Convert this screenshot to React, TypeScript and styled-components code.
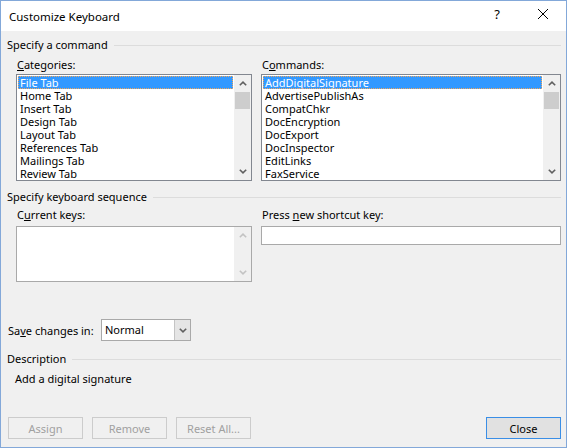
import React from "react";
import styled, { createGlobalStyle } from "styled-components";

const Global = createGlobalStyle`
  html, body { margin: 0; padding: 0; background: #f0f0f0; }
  * { box-sizing: border-box; }
  body { font-family: "Noto Sans", "Open Sans", Arial, sans-serif; font-size: 11px; color: #000; }
`;

const Window = styled.div`
  width: 567px;
  height: 448px;
  border: 1px solid #83a8d9;
  background: #f0f0f0;
  display: flex;
  flex-direction: column;
  overflow: hidden;
`;

const TitleBar = styled.div`
  height: 30px;
  background: #fff;
  display: flex;
  align-items: center;
  padding-left: 8px;
  flex-shrink: 0;
`;

const Title = styled.div`
  flex: 1;
  font-size: 11.5px;
  line-height: 16px;
  margin-top: 1px;
`;

const TitleButton = styled.div`
  width: 46px;
  height: 30px;
  display: flex;
  align-items: flex-start;
  justify-content: center;
  padding-top: 5px;
  font-size: 13px;
  line-height: 16px;
`;

const Body = styled.div`
  flex: 1;
  display: flex;
  flex-direction: column;
  padding: 0 5px 8px 6px;
`;

const SectionHeader = styled.div<{ $top: number }>`
  display: flex;
  align-items: center;
  gap: 6px;
  height: 16px;
  line-height: 16px;
  margin-top: ${(p) => p.$top}px;
`;

const SectionLine = styled.div`
  flex: 1;
  height: 1px;
  background: #dcdcdc;
`;

const Columns = styled.div<{ $top: number }>`
  display: grid;
  grid-template-columns: 236px 300px;
  column-gap: 9px;
  margin-left: 9px;
  margin-top: ${(p) => p.$top}px;
`;

const Field = styled.div`
  display: flex;
  flex-direction: column;
`;

const Label = styled.div<{ $gap: number }>`
  height: 16px;
  line-height: 16px;
  margin-bottom: ${(p) => p.$gap}px;
  padding-left: 1px;
`;

const ListBox = styled.div<{ $h: number; $disabled?: boolean }>`
  height: ${(p) => p.$h}px;
  border: 1px solid ${(p) => (p.$disabled ? "#a9a9a9" : "#828790")};
  background: #fff;
  display: flex;
`;

const Items = styled.div`
  flex: 1;
  padding: 1px;
  overflow: hidden;
`;

const Item = styled.div<{ $selected?: boolean }>`
  height: 13px;
  line-height: 13px;
  padding-left: 2px;
  white-space: nowrap;
  background: ${(p) => (p.$selected ? "#3399ff" : "transparent")};
  color: ${(p) => (p.$selected ? "#fff" : "#000")};
  outline: ${(p) => (p.$selected ? "1px dotted #f2a65a" : "none")};
  outline-offset: -1px;
`;

const ScrollBar = styled.div`
  width: 17px;
  background: #f0f0f0;
  display: flex;
  flex-direction: column;
`;

const ScrollArrow = styled.div`
  height: 17px;
  display: flex;
  align-items: center;
  justify-content: center;
`;

const Track = styled.div`
  flex: 1;
  padding: 0 1px;
`;

const Thumb = styled.div`
  height: 17px;
  background: #cdcdcd;
`;

const TextBox = styled.div`
  height: 19px;
  border: 1px solid #a9a9a9;
  background: #fff;
`;

const SaveRow = styled.div`
  display: flex;
  align-items: center;
  margin-top: 37px;
  height: 22px;
  padding-left: 1px;
`;

const SaveLabel = styled.div`
  width: 93px;
`;

const Combo = styled.div`
  width: 90px;
  height: 22px;
  border: 1px solid #a9a9a9;
  background: #fff;
  display: flex;
`;

const ComboText = styled.div`
  flex: 1;
  padding-left: 3px;
  line-height: 20px;
`;

const ComboButton = styled.div`
  width: 16px;
  background: #e5e5e5;
  border-left: 1px solid #c4c4c4;
  display: flex;
  align-items: center;
  justify-content: center;
`;

const DescText = styled.div`
  margin-top: 4px;
  margin-left: 8px;
  height: 16px;
  line-height: 16px;
`;

const ButtonRow = styled.div`
  margin-top: auto;
  display: flex;
  gap: 9px;
  padding-left: 1px;
`;

const Button = styled.div<{ $disabled?: boolean; $default?: boolean }>`
  width: 75px;
  height: 22px;
  display: flex;
  align-items: center;
  justify-content: center;
  border: 1px solid ${(p) => (p.$default ? "#3a8ee6" : p.$disabled ? "#cccccc" : "#adadad")};
  background: ${(p) => (p.$disabled ? "#f0f0f0" : "#e1e1e1")};
  color: ${(p) => (p.$disabled ? "#a0a0a0" : "#000")};
  margin-left: ${(p) => (p.$default ? "auto" : "0")};
`;

const Chevron = ({ up, color = "#606060" }: { up?: boolean; color?: string }) => (
  <svg width="8" height="5" viewBox="0 0 8 5">
    <polyline
      points={up ? "0.8,4.3 4,1.2 7.2,4.3" : "0.8,0.7 4,3.8 7.2,0.7"}
      fill="none"
      stroke={color}
      strokeWidth="1.6"
    />
  </svg>
);

const Scroll = ({ disabled }: { disabled?: boolean }) => (
  <ScrollBar>
    <ScrollArrow>
      <Chevron up color={disabled ? "#c3c3c3" : "#606060"} />
    </ScrollArrow>
    <Track>{!disabled && <Thumb />}</Track>
    <ScrollArrow>
      <Chevron color={disabled ? "#c3c3c3" : "#606060"} />
    </ScrollArrow>
  </ScrollBar>
);

const categories = [
  "File Tab",
  "Home Tab",
  "Insert Tab",
  "Design Tab",
  "Layout Tab",
  "References Tab",
  "Mailings Tab",
  "Review Tab",
];

const commands = [
  "AddDigitalSignature",
  "AdvertisePublishAs",
  "CompatChkr",
  "DocEncryption",
  "DocExport",
  "DocInspector",
  "EditLinks",
  "FaxService",
];

export default function App() {
  return (
    <>
      <Global />
      <Window>
        <TitleBar>
          <Title>Customize Keyboard</Title>
          <TitleButton>?</TitleButton>
          <TitleButton>
            <svg width="12" height="12" viewBox="0 0 12 12" style={{ marginTop: 2 }}>
              <path d="M1 1 L11 11 M11 1 L1 11" stroke="#000" strokeWidth="1" />
            </svg>
          </TitleButton>
        </TitleBar>
        <Body>
          <SectionHeader $top={6}>
            <span>Specify a command</span>
            <SectionLine />
          </SectionHeader>
          <Columns $top={4}>
            <Field>
              <Label $gap={1}>
                <u>C</u>ategories:
              </Label>
              <ListBox $h={107}>
                <Items>
                  {categories.map((c, i) => (
                    <Item key={c} $selected={i === 0}>
                      {c}
                    </Item>
                  ))}
                </Items>
                <Scroll />
              </ListBox>
            </Field>
            <Field>
              <Label $gap={1}>
                C<u>o</u>mmands:
              </Label>
              <ListBox $h={107}>
                <Items>
                  {commands.map((c, i) => (
                    <Item key={c} $selected={i === 0}>
                      {c}
                    </Item>
                  ))}
                </Items>
                <Scroll />
              </ListBox>
            </Field>
          </Columns>
          <SectionHeader $top={8}>
            <span>Specify keyboard sequence</span>
            <SectionLine />
          </SectionHeader>
          <Columns $top={2}>
            <Field>
              <Label $gap={3}>
                C<u>u</u>rrent keys:
              </Label>
              <ListBox $h={56} $disabled>
                <Items />
                <Scroll disabled />
              </ListBox>
            </Field>
            <Field>
              <Label $gap={3}>
                Press <u>n</u>ew shortcut key:
              </Label>
              <TextBox />
            </Field>
          </Columns>
          <SaveRow>
            <SaveLabel>
              Sa<u>v</u>e changes in:
            </SaveLabel>
            <Combo>
              <ComboText>Normal</ComboText>
              <ComboButton>
                <Chevron />
              </ComboButton>
            </Combo>
          </SaveRow>
          <SectionHeader $top={10}>
            <span>Description</span>
            <SectionLine />
          </SectionHeader>
          <DescText>Add a digital signature</DescText>
          <ButtonRow>
            <Button $disabled>Assign</Button>
            <Button $disabled>Remove</Button>
            <Button $disabled>Reset All...</Button>
            <Button $default>Close</Button>
          </ButtonRow>
        </Body>
      </Window>
    </>
  );
}
